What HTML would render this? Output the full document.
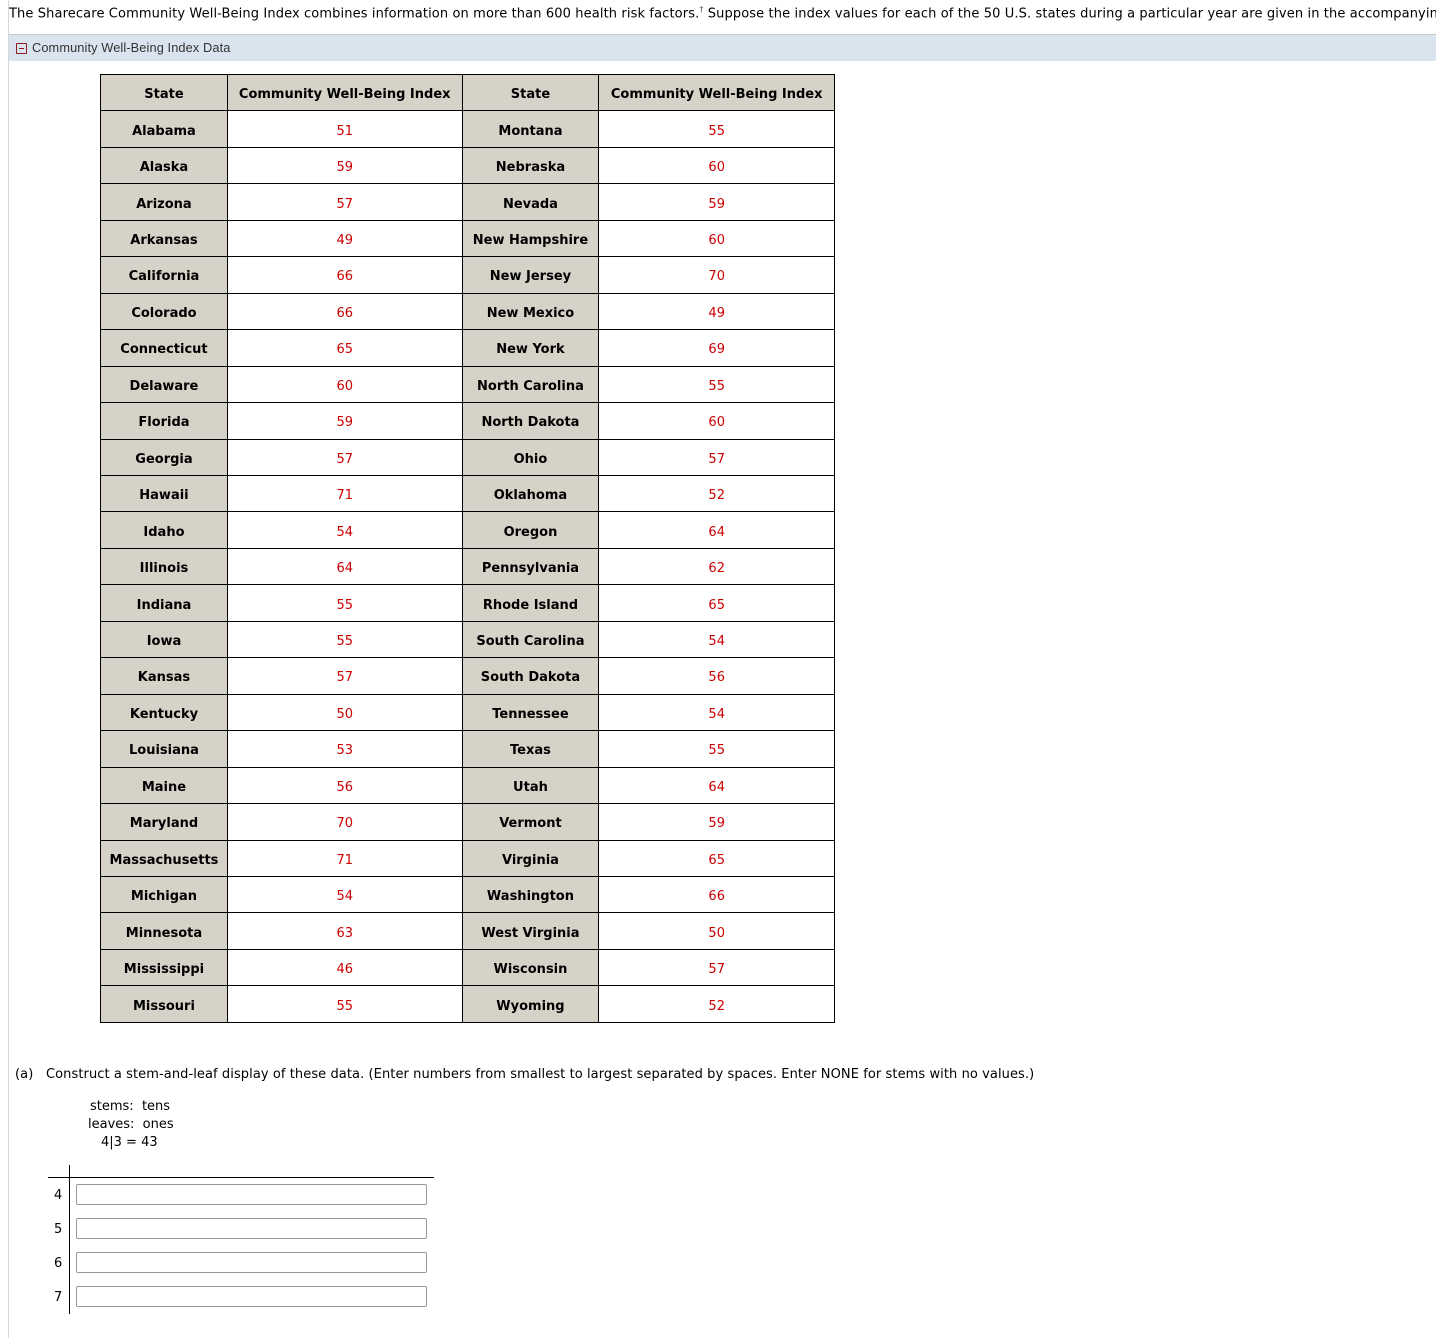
<!DOCTYPE html>
<html><head><meta charset="utf-8"><style>
*{box-sizing:border-box}
body{margin:0;width:1436px;height:1338px;background:#fff;font-family:"DejaVu Sans","Liberation Sans",Verdana,sans-serif;font-size:13px;color:#000;position:relative;overflow:hidden}
.abs{position:absolute}
#lb{left:8px;top:0;width:1px;height:1338px;background:#d8d8d8}
#intro{left:9px;top:5px;white-space:nowrap;font-size:13px;letter-spacing:0.12px}
#hd{left:9px;top:34px;width:1427px;height:27px;background:#dae4ee;border-top:1px solid #c8c8c8}
#hd span{position:absolute;left:23px;top:5px;font-family:"Liberation Sans",Arial,sans-serif;font-size:12.8px;color:#333;letter-spacing:0.1px}
#hd i{position:absolute;left:7px;top:8px;width:11px;height:11px;border:1px solid #8b1a1a;border-radius:1px}
#hd i:after{content:"";position:absolute;left:2px;top:4px;width:5px;height:1px;background:#8b1a1a}
table{position:absolute;left:100px;top:74px;border-collapse:collapse;width:735px}
td{border:1px solid #000;height:36.46px;text-align:center;padding:4px 0 0 0;font-size:13px}
td.s{background:#d6d2c8;font-weight:bold}
td.v{color:#c00}
tr.h td{background:#d6d2c8;font-weight:bold}
.inp{position:absolute;left:76px;width:351px;height:21px;border:1px solid #999;border-radius:2px}
.lab{position:absolute;left:54px;font-size:13px}
</style></head><body>
<div class="abs" id="lb"></div>
<div class="abs" id="intro">The Sharecare Community Well-Being Index combines information on more than 600 health risk factors.<sup style="font-size:8px;color:#555">†</sup> Suppose the index values for each of the 50 U.S. states during a particular year are given in the accompanying</div>
<div class="abs" id="hd"><i></i><span>Community Well-Being Index Data</span></div>
<table>
<colgroup><col style="width:127px"><col style="width:235px"><col style="width:137px"><col style="width:236px"></colgroup>
<tr class="h"><td>State</td><td>Community Well-Being Index</td><td>State</td><td>Community Well-Being Index</td></tr>
<tr><td class="s">Alabama</td><td class="v">51</td><td class="s">Montana</td><td class="v">55</td></tr>
<tr><td class="s">Alaska</td><td class="v">59</td><td class="s">Nebraska</td><td class="v">60</td></tr>
<tr><td class="s">Arizona</td><td class="v">57</td><td class="s">Nevada</td><td class="v">59</td></tr>
<tr><td class="s">Arkansas</td><td class="v">49</td><td class="s">New Hampshire</td><td class="v">60</td></tr>
<tr><td class="s">California</td><td class="v">66</td><td class="s">New Jersey</td><td class="v">70</td></tr>
<tr><td class="s">Colorado</td><td class="v">66</td><td class="s">New Mexico</td><td class="v">49</td></tr>
<tr><td class="s">Connecticut</td><td class="v">65</td><td class="s">New York</td><td class="v">69</td></tr>
<tr><td class="s">Delaware</td><td class="v">60</td><td class="s">North Carolina</td><td class="v">55</td></tr>
<tr><td class="s">Florida</td><td class="v">59</td><td class="s">North Dakota</td><td class="v">60</td></tr>
<tr><td class="s">Georgia</td><td class="v">57</td><td class="s">Ohio</td><td class="v">57</td></tr>
<tr><td class="s">Hawaii</td><td class="v">71</td><td class="s">Oklahoma</td><td class="v">52</td></tr>
<tr><td class="s">Idaho</td><td class="v">54</td><td class="s">Oregon</td><td class="v">64</td></tr>
<tr><td class="s">Illinois</td><td class="v">64</td><td class="s">Pennsylvania</td><td class="v">62</td></tr>
<tr><td class="s">Indiana</td><td class="v">55</td><td class="s">Rhode Island</td><td class="v">65</td></tr>
<tr><td class="s">Iowa</td><td class="v">55</td><td class="s">South Carolina</td><td class="v">54</td></tr>
<tr><td class="s">Kansas</td><td class="v">57</td><td class="s">South Dakota</td><td class="v">56</td></tr>
<tr><td class="s">Kentucky</td><td class="v">50</td><td class="s">Tennessee</td><td class="v">54</td></tr>
<tr><td class="s">Louisiana</td><td class="v">53</td><td class="s">Texas</td><td class="v">55</td></tr>
<tr><td class="s">Maine</td><td class="v">56</td><td class="s">Utah</td><td class="v">64</td></tr>
<tr><td class="s">Maryland</td><td class="v">70</td><td class="s">Vermont</td><td class="v">59</td></tr>
<tr><td class="s">Massachusetts</td><td class="v">71</td><td class="s">Virginia</td><td class="v">65</td></tr>
<tr><td class="s">Michigan</td><td class="v">54</td><td class="s">Washington</td><td class="v">66</td></tr>
<tr><td class="s">Minnesota</td><td class="v">63</td><td class="s">West Virginia</td><td class="v">50</td></tr>
<tr><td class="s">Mississippi</td><td class="v">46</td><td class="s">Wisconsin</td><td class="v">57</td></tr>
<tr><td class="s">Missouri</td><td class="v">55</td><td class="s">Wyoming</td><td class="v">52</td></tr>
</table>
<div class="abs" style="left:15px;top:1067px;white-space:nowrap;letter-spacing:0.08px">(a)&nbsp;&nbsp; Construct a stem-and-leaf display of these data. (Enter numbers from smallest to largest separated by spaces. Enter NONE for stems with no values.)</div>
<div class="abs" style="left:90px;top:1099px">stems:&nbsp; tens</div>
<div class="abs" style="left:88px;top:1117px">leaves:&nbsp; ones</div>
<div class="abs" style="left:101px;top:1135px">4|3 = 43</div>
<div class="abs" style="left:69px;top:1165px;width:1px;height:149px;background:#000"></div>
<div class="abs" style="left:48px;top:1177px;width:386px;height:1px;background:#000"></div>
<div class="lab" style="top:1188px">4</div><div class="inp" style="top:1184px"></div>
<div class="lab" style="top:1222px">5</div><div class="inp" style="top:1218px"></div>
<div class="lab" style="top:1256px">6</div><div class="inp" style="top:1252px"></div>
<div class="lab" style="top:1290px">7</div><div class="inp" style="top:1286px"></div>
</body></html>
